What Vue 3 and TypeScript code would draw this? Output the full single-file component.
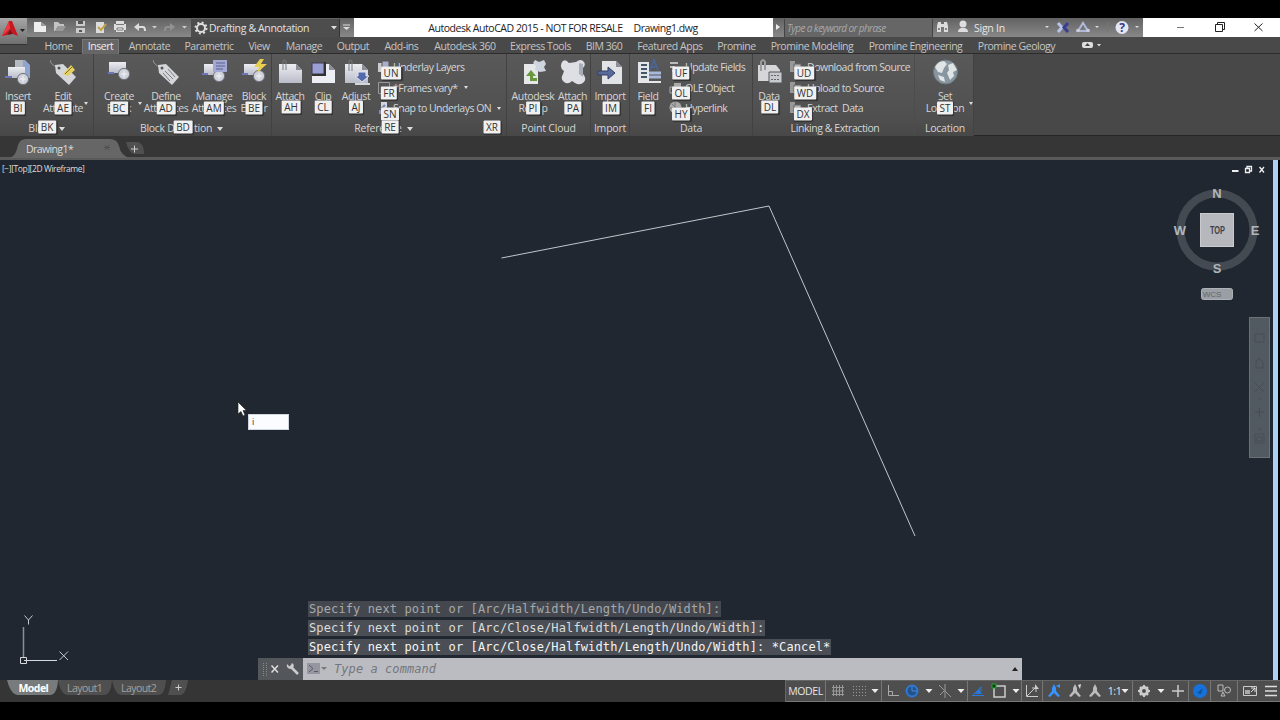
<script setup lang="ts">
interface Tool { icon: string; lines: string[]; arrow?: boolean }
interface Row { icon: string; text: string; arrow?: boolean }
interface Panel { cls: string; title: string; tools: Tool[]; rows?: Row[]; arrow?: boolean }

const block = (x: number, y: number) =>
  `<rect x="${x}" y="${y}" width="17" height="11" fill="url(#pale)"/><circle cx="${x + 15}" cy="${y + 12}" r="5.6" fill="#cfd2da" stroke="#70747d"/><path d="M${x + 12} ${y + 12}h6M${x + 15} ${y + 9}v6" stroke="#f2f3f6"/>`
const page = '<path d="M2 5H19L25 11V24H2Z" fill="url(#pale)"/><path d="M19 5V11H25Z" fill="#8b8e96"/>'
const tag = '<path d="M0 1Q1 6 7 8" fill="none" stroke="#999"/><path d="M5 6L13 5L26 18L19 26L6 14Z" fill="#d5d6da"/><circle cx="9" cy="9" r="1.500" fill="#555"/>'
const icons: Record<string, string> = {
  insert: `<path d="M12 1H20L25 6V19H12Z" fill="#8fa4ce"/><path d="M10 1H18V10H10Z" fill="#b6bac1"/>${block(3, 8)}<path d="M0 18H7" stroke="#6b76b8" stroke-width="2"/>`,
  edit: `${tag}<path d="M13 15L21 6L25 11L18 17Z" fill="#e5cf62"/><path d="M15 15L23 7" stroke="#7b6e2a"/>`,
  create: `${block(3, 3)}<path d="M2 14H8" stroke="#6b76b8" stroke-width="2"/>`,
  define: `${tag}<path d="M12 12L20 20M15 10L22 18M10 14L17 22" stroke="#7c7f86"/>`,
  manage: `${block(3, 5)}<path d="M12 1H26V13H12Z" fill="#a3a9d2"/><path d="M15 4H24M15 7H24M15 10H22" stroke="#59618f"/><path d="M1 15H7" stroke="#6b76b8" stroke-width="2"/>`,
  editor: `${block(3, 5)}<path d="M19 0L13 8H18L16 14L26 5H20L23 0Z" fill="#e9cf4e"/><path d="M1 15H7" stroke="#6b76b8" stroke-width="2"/>`,
  attach: `${page}<path d="M6 11V2Q7 0 9 2V11" stroke="#777a82" fill="none"/>`,
  clip: `<path d="M2 5H19L25 11V24H2Z" fill="#eceef3"/><path d="M19 5V11H25Z" fill="#8b8e96"/><path d="M2 4H14V15H2Z" fill="#9a9fd4" stroke="#3b3d4c"/><path d="M2 16H15V3" stroke="#333" stroke-width="2" fill="none"/>`,
  adjust: `${page}<path d="M6 12V2Q7 0 9 2V12" stroke="#777a82" fill="none"/><path d="M15 13H23V17H26L19 23L12 17H15Z" fill="#536aad" stroke="#e4e6ee"/><path d="M12 25H27" stroke="#d4d6dc" stroke-width="2"/>`,
  recap: '<path d="M4 5H18V25H4Z" fill="#e6e7e9"/><path d="M15 1L19 3L24 1L26 5L24 8L26 12L20 13L15 11L16 7L13 4Z" fill="#cfd5df"/><path d="M17 22H10V17H6L11 11L16 17H13V19H17Z" fill="#69993c"/>',
  cloud: '<path d="M3 3Q6 -1 10 4L17 3Q22 -1 25 3Q27 6 24 9L24 15Q28 19 25 23Q21 27 16 24L13 22Q9 26 5 23Q1 20 4 15L5 12Q0 9 3 3Z" fill="#dddfe5"/><path d="M20 4L24 5V18L20 15Z" fill="#a8adba"/>',
  import: '<path d="M5 2H19L25 8V25H5Z" fill="#e2e3e6"/><path d="M19 2V8H25Z" fill="#8b8e96"/><path d="M1 12H11V8L18 14L11 20V16H1Z" fill="#586a9c" stroke="#353f63"/>',
  field: '<path d="M3 3H14V22H3Z" fill="#e3e5ea"/><path d="M6 6H12M6 10H12M6 14H12M6 18H12" stroke="#456" stroke-width="2"/><path d="M15 11L19 1L23 11M16 8H22" stroke="#4d6394" stroke-width="2" fill="none"/><path d="M14 14H26M14 18H26" stroke="#a8b8db" stroke-width="3"/><path d="M3 23H26" stroke="#e6e7e9" stroke-width="2"/>',
  data: '<path d="M2 6H20L24 11V22H2Z" fill="#d6d6d8"/><path d="M5 12V3Q7 -1 9 3V11" stroke="#9a9ca0" stroke-width="2" fill="none"/><path d="M13 13H26V24H13Z" fill="#c8c9cd" stroke="#55575c"/><path d="M15 16.500H24M15 20.500H24" stroke="#666" stroke-dasharray="2 1"/>',
  globe: '<circle cx="13.500" cy="13" r="12" fill="#8796a0" stroke="#6f7a81"/><path d="M3 8Q6 2 12 2L15 5L12 9L10 14L6 13ZM16 6L21 4L25 11L21 13L22 17L18 21L15 14L17 11ZM6 16L12 18L13 23L8 21Z" fill="#e0e4e5"/>',
  ul: '<path d="M1 3H8V12H1Z" fill="#ccc"/><path d="M5 1H12V9H5Z" fill="#a8aec8" stroke="#555"/>',
  fr: '<path d="M1.500 1.500H12.500V12.500H1.500Z" fill="none" stroke="#999"/>',
  sn: '<path d="M4 1H10V7H4Z" fill="#d4d6dd"/><path d="M2 9H6V13H2Z" fill="#8490c0"/><path d="M4 8L8 4M9 7L12 10" stroke="#7884b4" stroke-width="2"/>',
  uf: '<path d="M1 3H9M1 7H6M3 11H10" stroke="#bbb" stroke-width="2"/>',
  ol: '<path d="M1 6H7V12H1Z" fill="none" stroke="#aaa"/><path d="M5 2H12V6H5Z" fill="#aaa"/>',
  hy: '<circle cx="6.500" cy="6.500" r="6" fill="#aaa"/><path d="M1 7H12M6 1V12M3 3L10 10" stroke="#777"/>',
  dn: '<path d="M1 1H6V12H1Z" fill="#999"/><path d="M5 4H12V11H5Z" fill="#b4b4b7" stroke="#666"/>',
}

const tabs = ['Home', 'Insert', 'Annotate', 'Parametric', 'View', 'Manage', 'Output', 'Add-ins', 'Autodesk 360', 'Express Tools', 'BIM 360', 'Featured Apps', 'Promine', 'Promine Modeling', 'Promine Engineering', 'Promine Geology']

const panels: Panel[] = [
  { cls: 'p-block', title: 'Block', arrow: true, tools: [{ icon: 'insert', lines: ['Insert'] }, { icon: 'edit', lines: ['Edit', 'Attribute'], arrow: true }] },
  { cls: 'p-def', title: 'Block Definition', arrow: true, tools: [{ icon: 'create', lines: ['Create', 'Block'], arrow: true }, { icon: 'define', lines: ['Define', 'Attributes'] }, { icon: 'manage', lines: ['Manage', 'Attributes'] }, { icon: 'editor', lines: ['Block', 'Editor'] }] },
  { cls: 'p-ref', title: 'Reference', arrow: true, tools: [{ icon: 'attach', lines: ['Attach'] }, { icon: 'clip', lines: ['Clip'] }, { icon: 'adjust', lines: ['Adjust'] }], rows: [{ icon: 'ul', text: 'Underlay Layers' }, { icon: 'fr', text: '*Frames vary*', arrow: true }, { icon: 'sn', text: 'Snap to Underlays ON', arrow: true }] },
  { cls: 'p-cloud', title: 'Point Cloud', tools: [{ icon: 'recap', lines: ['Autodesk', 'ReCap'] }, { icon: 'cloud', lines: ['Attach'] }] },
  { cls: 'p-import', title: 'Import', tools: [{ icon: 'import', lines: ['Import'] }] },
  { cls: 'p-data', title: 'Data', tools: [{ icon: 'field', lines: ['Field'] }], rows: [{ icon: 'uf', text: 'Update Fields' }, { icon: 'ol', text: 'OLE Object' }, { icon: 'hy', text: 'Hyperlink' }] },
  { cls: 'p-link', title: 'Linking & Extraction', tools: [{ icon: 'data', lines: ['Data'] }], rows: [{ icon: 'dn', text: 'Download from Source' }, { icon: 'dn', text: 'Upload to Source' }, { icon: 'dn', text: 'Extract  Data' }] },
  { cls: 'p-loc', title: 'Location', tools: [{ icon: 'globe', lines: ['Set', 'Location'], arrow: true }] },
]

const keytips: [string, number, number][] = [
  ['BI', 18, 107.5], ['AE', 63, 107.5], ['BC', 119, 107.5], ['AD', 166, 107.5], ['AM', 214, 107.5], ['BE', 254, 107.5],
  ['AH', 291, 106.5], ['CL', 323, 106.5], ['AJ', 356, 106.5], ['UN', 391, 72.5], ['FR', 389, 92.5], ['SN', 390, 113.5],
  ['BK', 47, 126.5], ['BD', 183, 126.5], ['RE', 390, 126.5], ['XR', 492, 126.5], ['PI', 533, 107.5], ['PA', 573, 107.5],
  ['IM', 611, 107.5], ['FI', 648, 107.5], ['UF', 681, 72.5], ['OL', 681, 92.5], ['HY', 681, 113.5], ['DL', 770, 106.5],
  ['UD', 804, 72.5], ['WD', 805, 92.5], ['DX', 803, 113.5], ['ST', 945, 107.5],
]

const man = (c: string) => `<path d="M8 1L10 5L10 8L14 13L12 14L8 10L4 14L2 13L6 8L6 5Z" fill="${c}"/>`
const down = '<path d="M4.500 6H11.500L8 10Z" fill="#eee"/>'
const status: { art?: string; text?: string; sep?: boolean }[] = [
  { text: 'MODEL', sep: true },
  { art: '<path d="M3.500 2V13M6.500 2V13M9.500 2V13M12.500 2V13M2 4.500H14M2 8H14M2 11.500H14" stroke="#999"/>' },
  { art: '<path d="M2 3.500H15M2 6.500H15M2 9.500H15M2 12.500H15" stroke="#999" stroke-dasharray="1 2"/>' },
  { art: down, sep: true },
  { art: '<path d="M3.500 2V12.500H14M3.500 8.500H7.500V12" stroke="#aaa" fill="none"/>' },
  { art: '<circle cx="8" cy="8" r="5.500" fill="#24518a" stroke="#2c78d4" stroke-width="2"/><path d="M8 3V8H13" stroke="#4a8ad8" fill="none"/>' },
  { art: down },
  { art: '<path d="M2 2L14 14M8 1V15M3 12L8 7" stroke="#999" fill="none"/>' },
  { art: down, sep: true },
  { art: '<path d="M2 12.500H14M3 12L11 4V8" stroke="#2879db" fill="none"/><path d="M5 11L9 6L12 11Z" fill="#2879db"/>' },
  { art: '<path d="M3 3H14V14H3Z" fill="none" stroke="#ccc" stroke-width="1.500"/><path d="M1 1H5V5H1Z" fill="#123d16" stroke="#25a635"/>' },
  { art: down, sep: true },
  { art: '<path d="M2.500 2V13.500H14M3 13L11 5M8 5H12V9" stroke="#ccc" fill="none"/><path d="M11 1V6H15" fill="#ccc"/>', sep: true },
  { art: man('#3594ff') + '<path d="M10 3L14 1V5Z" fill="#3594ff"/>' },
  { art: man('#bbb') + '<path d="M11 2L14 1L13 6Z" fill="#ddd"/>' },
  { art: man('#bbb') },
  { text: '1:1', art: down, sep: true },
  { art: '<circle cx="8" cy="8" r="3.500" fill="none" stroke="#ccc" stroke-width="3"/><path d="M8 2V4M8 12V14M2 8H4M12 8H14M4 4L5 5M11 11L12 12M12 4L11 5M4 12L5 11" stroke="#ccc" stroke-width="2"/>' },
  { art: down },
  { art: '<path d="M2 8H14M8 2V14" stroke="#ccc" stroke-width="1.500"/>', sep: true },
  { art: '<circle cx="8" cy="8" r="7" fill="#1671db"/><path d="M5 10L11 5L9 11Z" fill="#115199"/>', sep: true },
  { art: '<path d="M2 2H7V8H2Z" fill="none" stroke="#bbb"/><circle cx="11.500" cy="7" r="3" fill="none" stroke="#bbb"/><path d="M5 13L7 9L9 13Z" fill="none" stroke="#bbb"/>', sep: true },
  { art: '<path d="M1.500 3.500H14.500V12.500H1.500Z" fill="none" stroke="#ccc"/><path d="M3 7H8V11H3Z" fill="#aaa"/><path d="M9 5H13V9M13 5L9 9" stroke="#ddd" fill="none"/>' },
  { art: '<path d="M2 3.500H14M2 8H14M2 12.500H14" stroke="#ddd" stroke-width="1.500"/>' },
]

const history = [
  'Specify next point or [Arc/Halfwidth/Length/Undo/Width]:',
  'Specify next point or [Arc/Close/Halfwidth/Length/Undo/Width]:',
  'Specify next point or [Arc/Close/Halfwidth/Length/Undo/Width]: *Cancel*',
]
</script>

<template>
  <div class="screen">
    <svg class="defs"><defs><linearGradient id="pale" x1="0" y1="0" x2="0" y2="1"><stop offset="0" stop-color="#edeef2" /><stop offset="1" stop-color="#b9bcc9" /></linearGradient></defs></svg>
    <header class="titlebar">
      <div class="quick">
        <div class="logo"><svg width="26" height="26"><path d="M2 18L9 3H12L18 18L13 16L10 11L7 17Z" fill="#c91620" /><path d="M9 3L10 11L2 18Z" fill="#ed3b42" /><path d="M10 11L13 16L7 17Z" fill="#7e1016" /><path d="M20 11H25L22.500 14Z" fill="#222" /></svg></div>
        <svg class="qat" width="164" height="19">
          <path d="M7 4H14L19 8V14H7Z" fill="#eee" /><path d="M14 4V8H19Z" fill="#999" />
          <path d="M27 4H31L33 6H37V8H31L28 13H27Z" fill="#c4c4c4" /><path d="M31 8H39L36 13H28Z" fill="#999" />
          <path d="M49 3H58V8H49ZM49 10H58V15H49Z" fill="#ccc" /><path d="M51 3H56V6H51ZM52 12H55V14H52Z" fill="#555" />
          <path d="M69 4H77V15H69Z" fill="#ddd" /><path d="M71 9L74 12L79 6" stroke="#c3a34a" stroke-width="2" fill="none" />
          <path d="M89 3H97V6H99V12H97V14H89V12H87V6H89Z" fill="#ddd" /><path d="M90 10H96V12H90ZM89 6.500H97" stroke="#777" fill="#fff" />
          <path d="M109 9H116Q118 9 118 13" stroke="#ddd" stroke-width="2" fill="none" /><path d="M107 9L112 5V13Z" fill="#ddd" />
          <path d="M125 8H130L127.500 10.500ZM155 8H160L157.500 10.500Z" fill="#ccc" />
          <path d="M147 9H140Q138 9 138 13" stroke="#929292" stroke-width="2" fill="none" /><path d="M148 9L143 5V13Z" fill="#929292" />
        </svg>
        <div class="workspace">
          <svg width="16" height="16"><circle cx="8" cy="8" r="4" fill="none" stroke="#ddd" stroke-width="2" /><circle cx="8" cy="8" r="5.500" fill="none" stroke="#ddd" stroke-width="2" stroke-dasharray="2 2.300" /></svg>
          <span>Drafting &amp; Annotation</span>
          <svg class="end" width="10" height="8"><path d="M2 2H8L5 5.500Z" fill="#ddd" /></svg>
        </div>
        <svg width="14" height="19"><path d="M3 7H10" stroke="#ddd" /><path d="M3 9H10L6.500 12Z" fill="#ddd" /></svg>
      </div>
      <div class="caption"><span>Autodesk AutoCAD 2015 - NOT FOR RESALE</span><span>Drawing1.dwg</span></div>
      <div class="info">
        <svg width="11" height="19"><path d="M3 6V12L7 9Z" fill="#eee" /></svg>
        <div class="search">Type a keyword or phrase</div>
        <svg width="41" height="19"><path d="M5 4H8V14H4V8ZM11 4H14L15 8V14H11ZM8 6H11V9H8Z" fill="#ddd" /><path d="M5 11H7M12 11H14" stroke="#333" /><circle cx="30" cy="6" r="3.500" fill="#ddd" /><path d="M25 14Q25 11 28 10H32Q35 11 35 14Z" fill="#ddd" /></svg>
        <span class="sign">Sign In</span>
        <svg width="104" height="19"><path d="M6 8H10L8 10ZM56 8H60L58 10ZM96 8H100L98 10Z" fill="#ddd" /><path d="M19 5L23 9.500L19 14" fill="none" stroke="#b6c4ec" stroke-width="3" /><path d="M29 5L25 9.500L29 14" fill="none" stroke="#3b3c93" stroke-width="3" /><path d="M39 13L44 5L49 13Z" fill="none" stroke="#aeb8da" stroke-width="2" /><circle cx="39" cy="12.500" r="1.800" fill="#ccd" /><circle cx="49" cy="12.500" r="1.800" fill="#ccd" /><path d="M68.500 4V15" stroke="#777" /><circle cx="83" cy="9.500" r="6.500" fill="#e4e6f4" /><text x="83" y="14" text-anchor="middle" class="help">?</text></svg>
      </div>
      <svg class="winctl" width="137" height="19"><path d="M34 9.500H41" stroke="#777" /><path d="M72.500 6.500H79.500V13.500H72.500ZM74.500 6.500V4.500H81.500V11.500H79.500M111.500 5.500L119.500 13M119.500 5.500L111.500 13" fill="none" stroke="#222" /></svg>
    </header>

    <nav class="tabs">
      <span v-for="t in tabs" :key="t" :class="{ active: t === 'Insert' }">{{ t }}</span>
      <svg width="42" height="16"><rect x="19" y="5" width="11" height="6" rx="2" fill="#ddd" /><path d="M22 9L24.500 6L27 9Z" fill="#444" /><path d="M34 7H38L36 9.500Z" fill="#ddd" /></svg>
    </nav>

    <section class="ribbon">
      <div v-for="p in panels" :key="p.title" class="panel" :class="p.cls">
        <div class="tools">
          <div v-for="t in p.tools" :key="t.lines.join()" class="tool">
            <svg width="27" height="27" v-html="icons[t.icon]" />
            <span v-for="l in t.lines" :key="l">{{ l }}</span>
            <i v-if="t.arrow" class="dot" />
          </div>
          <div v-if="p.rows" class="rows">
            <div v-for="r in p.rows" :key="r.text" class="row">
              <svg width="14" height="14" v-html="icons[r.icon]" /><span>{{ r.text }}</span><i v-if="r.arrow" />
            </div>
          </div>
        </div>
        <div class="ptitle"><span>{{ p.title }}</span><i v-if="p.arrow" /></div>
      </div>
      <b v-for="k in keytips" :key="k[0]" class="tip" :style="{ left: k[1] + 'px', top: k[2] - 54 + 'px' }">{{ k[0] }}</b>
    </section>

    <div class="files">
      <svg width="150" height="22"><path d="M10 22Q16 20 18 9Q20 3 26 3H110Q117 3 119 10Q121 20 130 22Z" fill="#666" /><path d="M126 6H136Q144 6 144 18H134Q129 17 126 6Z" fill="#505050" /><path d="M134.500 9.500V16.500M131 13H138" stroke="#ccc" /><path d="M105 9L109 14M109 9L105 14M104 11.500H110" stroke="#505050" /><text x="26" y="17">Drawing1*</text></svg>
    </div>

    <main class="canvas">
      <svg class="drawing" width="1273" height="520">
        <path d="M501.500 98L769 46L915 376" fill="none" stroke="#d5d8dc" stroke-width="0.900" />
        <path d="M23.500 467V497" stroke="#8b9097" stroke-width="1.500" /><path d="M20.500 497.500H26.500V503.500H20.500ZM24 500.500H57" stroke="#d5d8dc" fill="none" />
        <path d="M24.500 455.500L28.500 460V464.500M32.500 455.500L28.500 460M59.500 491.500L68 500M68 491.500L59.500 500" stroke="#c5c8cd" fill="none" />
        <path d="M238 242V254L241 251.500L243 256L245 255L243 250.500H246.500Z" fill="#fff" stroke="#161b22" stroke-width="0.600" />
        <path d="M1232 11H1238.500" stroke="#eee" stroke-width="2" /><path d="M1245.500 8.500H1249.500V12.500H1245.500ZM1247 8V6.500H1251.500V11H1250M1259.500 7L1264 12.500M1264 7L1259.500 12.500" fill="none" stroke="#eee" stroke-width="1.300" />
        <circle cx="1217" cy="70" r="36.500" fill="none" stroke="#434a52" stroke-width="8" />
        <rect x="1200.500" y="53.500" width="33" height="33" fill="#b6b8bd" stroke="#c9cbce" />
        <g class="compass"><text x="1217" y="37.500">N</text><text x="1217" y="112.500">S</text><text x="1180" y="75">W</text><text x="1255" y="75">E</text></g>
        <text x="1217.500" y="74" class="top" textLength="15" lengthAdjust="spacingAndGlyphs">TOP</text>
        <rect x="1201.500" y="128.500" width="31" height="11" rx="2" fill="#9a9ea5" stroke="#aeb1b6" /><text x="1212" y="136.500" class="wcs">WCS</text>
        <rect x="1249.500" y="157.500" width="20" height="140" fill="#525a61" stroke="#6a7278" />
        <path d="M1255 174H1264V182H1255ZM1256 202L1259 198L1263 202V208H1256ZM1255 232L1264 223M1255 223L1264 232M1255 252H1264M1259.500 248V257M1255 274H1264V283H1255ZM1257 277H1262V281H1257ZM1258 269H1261M1258 239H1261" fill="none" stroke="#464d54" />
      </svg>
      <span class="viewlabel">[−][Top][2D Wireframe]</span>
      <div class="dyn">i</div>
      <div class="command">
        <p v-for="(h, n) in history" :key="n" :class="'h' + n">{{ h }}</p>
        <div class="cmdline">
          <svg width="45" height="22"><path d="M5.500 5V18M8.500 5V18" stroke="#888" stroke-dasharray="1 1" /><path d="M13.500 7.500L20 14.500M20 7.500L13.500 14.500" stroke="#ddd" stroke-width="1.500" /><path d="M32 8L40 16" stroke="#ccc" stroke-width="2.500" /><path d="M29 6L32 9L34 5Q37 7 35 10L32 11Q28 10 29 6Z" fill="#ccc" /></svg>
          <div class="entry"><svg width="28" height="22"><rect x="4" y="5" width="13" height="11" fill="#9497a0" /><path d="M6 7L10 10.500L6 14M11 13.500H15" stroke="#555a64" fill="none" /><path d="M18 9H24L21 12Z" fill="#777" /></svg><em>Type a command</em><svg class="end" width="14" height="22"><path d="M4 13H10L7 9Z" fill="#222" /></svg></div>
        </div>
      </div>
    </main>

    <footer class="bottom">
      <svg class="layouts" width="200" height="22"><path d="M7 0H58Q57 15 50 15H18Q11 15 7 0Z" fill="#777b7b" /><path d="M58 0H112Q111 15 104 15H68Q61 15 58 0ZM112 0H166Q165 15 158 15H122Q115 15 112 0ZM172 0H188Q186 15 180 15H168Q170 8 172 0Z" fill="#4f4f4f" /><path d="M175.500 7.500H181.500M178.500 4.500V10.500" stroke="#ccc" /><text x="18.500" y="12" class="model">Model</text><text x="67" y="12">Layout1</text><text x="121" y="12">Layout2</text></svg>
      <div class="status">
        <div v-for="(s, n) in status" :key="n" :class="{ sep: s.sep }"><span v-if="s.text">{{ s.text }}</span><svg v-if="s.art" width="16" height="16" v-html="s.art" /></div>
      </div>
    </footer>
  </div>
</template>

<style>
html, body { margin: 0; background: #000; overflow: hidden; }
</style>

<style scoped>
.screen { width: 1280px; height: 720px; box-sizing: border-box; padding-top: 18px; background: #000; color: #d6d6d6; font: 11px/14px "Open Sans", "Noto Sans", sans-serif; display: flex; flex-direction: column; overflow: hidden; }
.defs { position: absolute; width: 0; height: 0; }
svg { display: block; flex: none; }
i { width: 0; height: 0; border: 3px solid transparent; border-top: 4px solid #ddd; border-bottom: 0; }
.end { margin-left: auto; }
.titlebar { height: 19px; flex: none; display: grid; grid-template-columns: 354px 419px 370px 137px; grid-template-rows: 19px; background: #fff; }
.quick, .info { display: flex; background: linear-gradient(#626262, #888); align-items: center; }
.logo { width: 27px; height: 26px; align-self: flex-start; background: linear-gradient(#a6a6a6, #6f6f6f); position: relative; z-index: 2; box-shadow: 0 1px #333; box-sizing: border-box; }
.workspace { width: 149px; height: 18px; display: flex; align-items: center; background: #4d4d4d; border-right: 1px solid #333; box-sizing: border-box; color: #e2e2e2; }
.workspace > svg:first-child { margin-left: 2px; }
.workspace span { font-size: 10.500px; letter-spacing: -0.350px; white-space: nowrap; }
.caption { display: flex; gap: 11px; justify-content: center; color: #222; font-size: 10.500px; line-height: 20px; letter-spacing: -0.460px; padding-right: 1px; white-space: nowrap; }
.search { width: 149px; height: 18px; box-sizing: border-box; border: 1px solid #444; border-width: 0 1px; background: #666; color: #a8a8a8; font-style: italic; font-size: 10px; line-height: 18px; padding-left: 2px; letter-spacing: -0.620px; }
.sign { width: 65px; color: #e6e6e6; font-size: 10.500px; letter-spacing: -0.250px; }
.help { font: bold 12px "Open Sans", sans-serif; fill: #353b88; }
.tabs { flex: none; height: 17px; display: grid; grid-template-columns: 43px 41px 57px 62px 38px 52px 46px 51px 76px 75px 52px 80px 53px 98px 109px 93px 42px; padding-left: 37px; background: #494949; text-align: center; line-height: 18px; font-size: 10.500px; color: #c5c5c5; white-space: nowrap; border-bottom: 1px solid #2c2c2c; box-sizing: border-box; letter-spacing: -0.450px; }
.tabs .active { background: #666; color: #eee; margin: 2px 2px 0 2px; line-height: 13px; border: 1px solid #777; border-bottom: 0; box-sizing: border-box; }
.ribbon { position: relative; height: 82px; flex: none; display: grid; grid-template-columns: 94px 178px 235px 84px 39px 123px 162px 59px; background: #484848; border-bottom: 1px solid #252525; box-sizing: border-box; }
.panel { background: linear-gradient(#595959, #505050 75%, #484848); border-right: 1px solid #424242; display: flex; flex-direction: column; white-space: nowrap; }
.tools { height: 66px; display: grid; grid-auto-flow: column; justify-content: start; }
.p-link { border-right-color: #4c4c4c; }
.p-block .tools { grid-template-columns: 36px 54px; }
.p-def .tools { grid-template-columns: 50px 44px 52px 28px; }
.p-ref .tools { grid-template-columns: 36px 30px 36px 130px; }
.p-cloud .tools { grid-template-columns: 52px 27px; }
.p-import .tools { grid-template-columns: 38px; }
.p-data .tools { grid-template-columns: 36px 86px; }
.p-link .tools { grid-template-columns: 32px 129px; }
.p-loc .tools { grid-template-columns: 60px; }
.tool { position: relative; display: flex; flex-direction: column; align-items: center; line-height: 12.500px; padding-top: 5px; font-size: 10.500px; }
.tool svg { margin-bottom: 3.500px; }
.tool span { letter-spacing: -0.400px; }
.dot { position: absolute; right: 2px; top: 48px; border-width: 2px; border-top-width: 3px; }
.rows { display: flex; flex-direction: column; padding-top: 3px; padding-left: 3px; }
.row { height: 20.500px; display: flex; align-items: center; font-size: 10.500px; letter-spacing: -0.500px; }
.row span { margin-left: 2px; white-space: pre; }
.row i { margin-left: 6px; border-width: 2px; border-top-width: 3px; }
.p-link .row { padding-left: 1px; letter-spacing: -0.480px; }
.p-link .row span { margin-left: 4px; }
.ptitle { height: 15px; display: flex; justify-content: center; align-items: center; gap: 5px; font-size: 10.500px; line-height: 15px; padding-top: 1px; letter-spacing: -0.200px; }
.p-def .ptitle { padding-right: 2px; letter-spacing: -0.300px; }
.p-ref .ptitle { padding-right: 11px; }
.p-link .ptitle { padding-left: 3px; letter-spacing: -0.430px; }
.p-loc .ptitle { padding-left: 2px; }
.tip { position: absolute; transform: translate(-50%, -50%); height: 13px; padding: 0 2.500px; background: #f0f0f0; border-radius: 1px; box-shadow: 1px 1px 1px #333; color: #333; font: 10px/13px "Open Sans", sans-serif; }
.files { height: 24px; flex: none; background: #363636; border-bottom: 3px solid #5a5a5a; box-sizing: border-box; }
.files text { font-size: 10.500px; letter-spacing: -0.600px; fill: #ddd; }
.canvas { position: relative; height: 520px; flex: none; background: #202730; border-right: 2px solid #000; box-sizing: border-box; box-shadow: inset -5px 0 #a9d2f5; }
.drawing { position: absolute; left: 0; top: 0; }
.compass text { font: bold 13px "Liberation Sans", sans-serif; fill: #b2b6bb; text-anchor: middle; }
.top { font: bold 10px "Liberation Sans", sans-serif; fill: #3f4248; text-anchor: middle; }
.wcs { font: 8px "Liberation Sans", sans-serif; fill: #62666d; text-anchor: middle; }
.viewlabel { position: absolute; left: 2px; top: 2px; font-size: 8.500px; color: #ddd; letter-spacing: -0.420px; }
.dyn { position: absolute; left: 248px; top: 254px; width: 41px; height: 16px; box-sizing: border-box; background: #fbfcff; border: 1px solid #cfd6df; color: #333; font-size: 9px; line-height: 14px; padding-left: 3px; }
.command { position: absolute; left: 258px; bottom: 0; width: 764px; }
.command p { margin: 0 0 3.500px 50px; width: max-content; padding: 0 1px; height: 15.500px; font: 12px/16px "DejaVu Sans Mono", monospace; letter-spacing: 0.120px; background: #4b4f55; color: #dcdcdc; white-space: pre; }
.command .h0 { color: #a6a8ab; background: #44484e; }
.command .h2 { color: #f4f4f4; }
.cmdline { display: flex; height: 22px; background: #53565a; }
.entry { display: flex; flex: 1; background: #bbbcc1; color: #73767c; }
.entry em { font: italic 12px/22px "DejaVu Sans Mono", monospace; letter-spacing: 0.070px; margin-left: 3px; }
.bottom { height: 22px; flex: none; display: flex; justify-content: space-between; background: #353535; }
.layouts text { font-size: 10.500px; fill: #a2a2a2; letter-spacing: -0.550px; }
.layouts .model { fill: #fff; font-weight: 700; }
.status { width: 495px; display: grid; grid-template-columns: 40px 24px 18px 14px 21px 18px 15px 18px 14px 19px 23px 12px 21px 22px 20px 20px 28px 22px 12px 22px 22px 27px 24px 18px; background: #4e4e4e; border-top: 1px solid #666; border-bottom: 1px solid #777; border-left: 1px solid #666; box-sizing: border-box; }
.status > div { display: flex; align-items: center; justify-content: center; box-sizing: border-box; color: #e6e6e6; }
.status .sep { border-right: 1px solid #777; }
.status span { letter-spacing: -0.400px; font-size: 10.500px; }
.status span + svg { margin: 0 -4px; }
</style>
